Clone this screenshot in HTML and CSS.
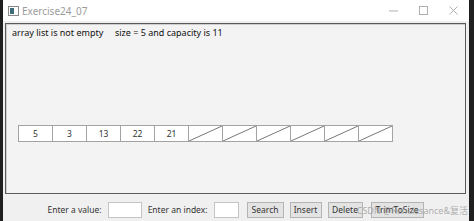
FILE: index.html
```html
<!DOCTYPE html>
<html lang="en">
<head>
  <meta charset="UTF-8">
  <title>Exercise24_07</title>
  <link rel="stylesheet" href="styles.css">
</head>
<body>
  <div class="window">
    <div class="titlebar">
      <svg class="app-icon" viewBox="0 0 11 10">
        <rect x="0.5" y="0.5" width="10" height="9" fill="#fff" stroke="#8a8a8a"></rect>
        <rect x="2" y="2" width="4" height="6" fill="#3d6b78"></rect>
      </svg>
      <span class="title">Exercise24_07</span>
      <div class="win-controls">
        <svg class="ctl" viewBox="0 0 10 10"><line x1="0" y1="5.5" x2="10" y2="5.5"></line></svg>
        <svg class="ctl" viewBox="0 0 10 10"><rect x="0.5" y="0.5" width="9" height="9"></rect></svg>
        <svg class="ctl" viewBox="0 0 10 10"><line x1="0.5" y1="0.5" x2="9.5" y2="9.5"></line><line x1="9.5" y1="0.5" x2="0.5" y2="9.5"></line></svg>
      </div>
    </div>

    <div class="content">
      <div class="panel">
        <div class="status">array list is not empty&nbsp;&nbsp;&nbsp;&nbsp; size = 5 and capacity is 11</div>
        <div class="cells">
          <div class="cell">5</div>
          <div class="cell">3</div>
          <div class="cell">13</div>
          <div class="cell">22</div>
          <div class="cell">21</div>
          <div class="cell empty"><svg viewBox="0 0 33 15" preserveAspectRatio="none"><line x1="0" y1="15" x2="33" y2="0"></line></svg></div>
          <div class="cell empty"><svg viewBox="0 0 33 15" preserveAspectRatio="none"><line x1="0" y1="15" x2="33" y2="0"></line></svg></div>
          <div class="cell empty"><svg viewBox="0 0 33 15" preserveAspectRatio="none"><line x1="0" y1="15" x2="33" y2="0"></line></svg></div>
          <div class="cell empty"><svg viewBox="0 0 33 15" preserveAspectRatio="none"><line x1="0" y1="15" x2="33" y2="0"></line></svg></div>
          <div class="cell empty"><svg viewBox="0 0 33 15" preserveAspectRatio="none"><line x1="0" y1="15" x2="33" y2="0"></line></svg></div>
          <div class="cell empty"><svg viewBox="0 0 33 15" preserveAspectRatio="none"><line x1="0" y1="15" x2="33" y2="0"></line></svg></div>
        </div>
      </div>

      <div class="toolbar">
        <span class="label">Enter a value:</span>
        <span class="field value-field"></span>
        <span class="label">Enter an index:</span>
        <span class="field index-field"></span>
        <span class="btn btn-search">Search</span>
        <span class="btn btn-insert">Insert</span>
        <span class="btn btn-delete">Delete</span>
        <span class="btn btn-trim">TrimToSize</span>
      </div>
    </div>

    <span class="watermark">CSDN @Renaissance&amp;复活</span>
  </div>
</body>
</html>
```

FILE: styles.css
```css
body {
  margin: 0;
  background: #202020;
}

.window {
  position: relative;
  width: 466px;
  height: 221px;
  border-left: 3px solid #1f1f1f;
  border-right: 5px solid #1f1f1f;
  background: #f0f0f0;
  display: flex;
  flex-direction: column;
  font-family: "Noto Sans", sans-serif;
  color: #222;
  overflow: hidden;
}

.titlebar {
  height: 21px;
  background: #fff;
  display: flex;
  align-items: center;
  padding-left: 5px;
}

.app-icon {
  width: 11px;
  height: 10px;
  margin-right: 3px;
}

.title {
  font-size: 10px;
  color: #9b9b9b;
}

.win-controls {
  margin-left: auto;
  display: flex;
  align-items: center;
  gap: 21px;
  padding-right: 11px;
}

.ctl {
  width: 9px;
  height: 9px;
  fill: none;
  stroke: #a8a8a8;
  stroke-width: 1;
}

.content {
  flex: 1;
  display: flex;
  flex-direction: column;
  padding: 2px 3px 0 2px;
}

.panel {
  height: 163px;
  border: 1px solid #5a5a5a;
  box-shadow: inset 1px 1px 0 #cfcfcf;
  background: #f3f3f3;
  padding: 3px 6px;
}

.status {
  font-size: 9px;
  line-height: 12px;
  color: #111;
}

.cells {
  display: flex;
  margin: 86px 0 0 6px;
}

.cell {
  box-sizing: border-box;
  width: 35px;
  height: 17px;
  border: 1px solid #a3a3a3;
  margin-left: -1px;
  background: #fff;
  font-size: 8.5px;
  line-height: 15px;
  text-align: center;
  color: #333;
}

.cell:first-child {
  margin-left: 0;
}

.cell.empty svg {
  display: block;
  width: 33px;
  height: 15px;
  stroke: #555;
  stroke-width: 0.8;
}

.toolbar {
  flex: 1;
  display: flex;
  align-items: center;
  justify-content: center;
  gap: 6px;
  padding-top: 4px;
  font-size: 8.5px;
  color: #333;
}

.field {
  height: 14px;
  background: #fff;
  border: 1px solid #c4c4c4;
}

.value-field {
  width: 32px;
}

.index-field {
  width: 23px;
  margin-right: 2px;
}

.btn {
  height: 14px;
  line-height: 14px;
  background: #e3e3e3;
  border: 1px solid #b4b4b4;
  text-align: center;
}

.btn-search { width: 35px; }
.btn-insert { width: 30px; }
.btn-delete { width: 33px; }
.btn-trim { width: 51px; margin-left: 2px; }

.watermark {
  position: absolute;
  right: 1px;
  bottom: 4px;
  font-size: 9px;
  color: rgba(150, 150, 150, 0.75);
  font-family: "Noto Sans", "Noto Sans CJK SC", sans-serif;
}
```
